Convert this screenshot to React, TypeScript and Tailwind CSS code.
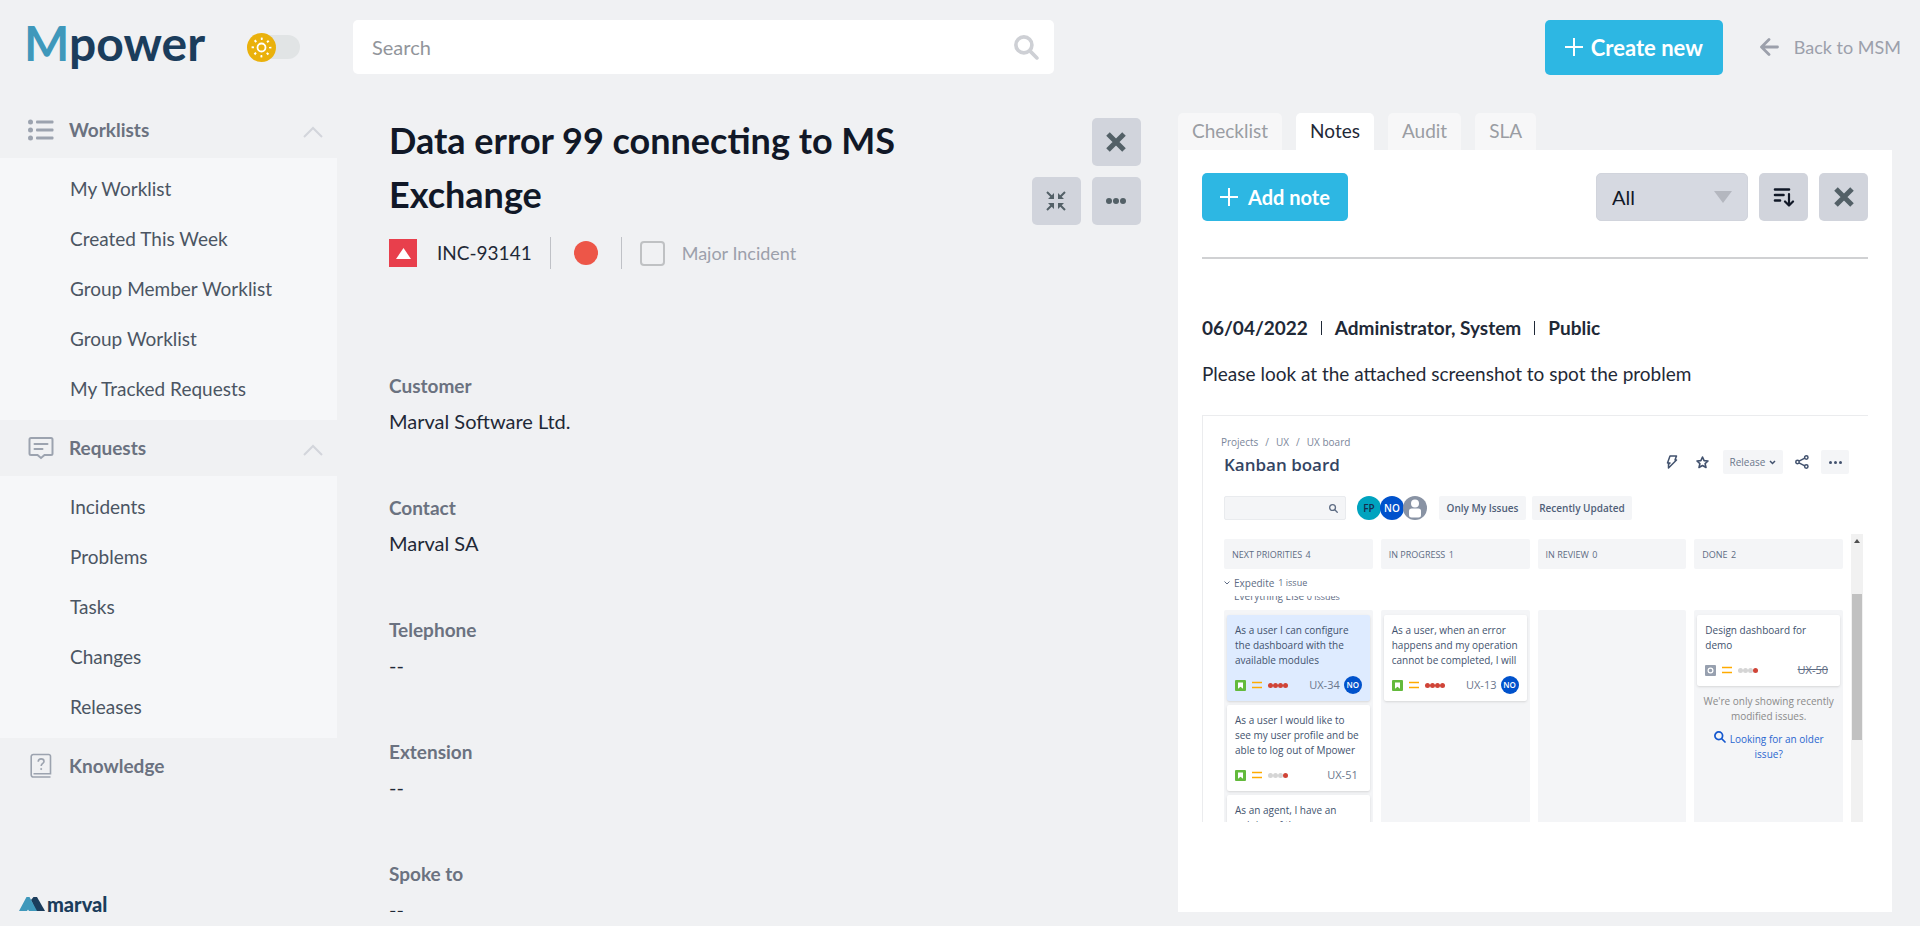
import { useState } from "react";
import type { ReactNode } from "react";

type Card = {
  id: string;
  text: string;
  level: number;
  avatar?: boolean;
  selected?: boolean;
  done?: boolean;
};

const menus = [
  {
    title: "Worklists",
    icon: <ListIcon />,
    items: [
      "My Worklist",
      "Created This Week",
      "Group Member Worklist",
      "Group Worklist",
      "My Tracked Requests",
    ],
  },
  {
    title: "Requests",
    icon: <CommentIcon />,
    items: ["Incidents", "Problems", "Tasks", "Changes", "Releases"],
  },
];

const fields = [
  ["Customer", "Marval Software Ltd."],
  ["Contact", "Marval SA"],
  ["Telephone", "--"],
  ["Extension", "--"],
  ["Spoke to", "--"],
];

const columns: { title: string; count: number; cards: Card[] }[] = [
  {
    title: "NEXT PRIORITIES",
    count: 4,
    cards: [
      {
        id: "UX-34",
        text: "As a user I can configure\nthe dashboard with the\navailable modules",
        level: 4,
        avatar: true,
        selected: true,
      },
      {
        id: "UX-51",
        text: "As a user I would like to\nsee my user profile and be\nable to log out of Mpower",
        level: 1,
      },
      {
        id: "UX-52",
        text: "As an agent, I have an\nopinion of the new",
        level: 1,
      },
    ],
  },
  {
    title: "IN PROGRESS",
    count: 1,
    cards: [
      {
        id: "UX-13",
        text: "As a user, when an error\nhappens and my operation\ncannot be completed, I will",
        level: 4,
        avatar: true,
      },
    ],
  },
  { title: "IN REVIEW", count: 0, cards: [] },
  {
    title: "DONE",
    count: 2,
    cards: [
      { id: "UX-50", text: "Design dashboard for\ndemo", level: 1, done: true },
    ],
  },
];

function ListIcon() {
  return (
    <svg width="26" height="22" viewBox="0 0 26 22" fill="#9ca3af">
      <circle cx="2.5" cy="3" r="2.5" />
      <circle cx="2.5" cy="11" r="2.5" />
      <circle cx="2.5" cy="19" r="2.5" />
      <rect x="8" y="1.5" width="17.5" height="3" rx="1" />
      <rect x="8" y="9.5" width="17.5" height="3" rx="1" />
      <rect x="8" y="17.5" width="17.5" height="3" rx="1" />
    </svg>
  );
}

function CommentIcon() {
  return (
    <svg
      width="26"
      height="24"
      viewBox="0 0 26 24"
      fill="none"
      stroke="#9ca3af"
      strokeWidth="2"
      strokeLinecap="round"
    >
      <path d="M3 2h20a1.5 1.5 0 0 1 1.5 1.5v14A1.5 1.5 0 0 1 23 19h-6.5L13 22l-3.5-3H3a1.5 1.5 0 0 1-1.5-1.5v-14A1.5 1.5 0 0 1 3 2z" />
      <path d="M6.5 8h13M6.5 13h8" />
    </svg>
  );
}

function BookIcon() {
  return (
    <svg width="26" height="26" viewBox="0 0 26 26" fill="none" stroke="#9ca3af">
      <path
        d="M22.5 24H5.500a2.300 2.300 0 0 1-2.300-2.300V3.500A2 2 0 0 1 5.200 1.500h15.500a1.800 1.800 0 0 1 1.800 1.800V20.800H5.500"
        strokeWidth="1.6"
      />
      <path
        d="M10.200 8.700c.1-1.900 1.400-2.800 2.900-2.800 1.700 0 2.900 1 2.900 2.500 0 2-2.800 2.200-2.800 4.600"
        strokeWidth="1.6"
      />
      <circle cx="13.2" cy="16" r=".6" fill="#9ca3af" />
    </svg>
  );
}

function CloseIcon() {
  return (
    <svg width="20" height="20" viewBox="0 0 20 20" stroke="#536067" strokeWidth="5">
      <path d="M2 2l16 16M18 2L2 18" />
    </svg>
  );
}

function CompressIcon() {
  return (
    <svg width="20" height="20" viewBox="0 0 20 20" fill="#536067" stroke="#536067">
      <g strokeWidth="2">
        <path d="M1 1l5 5M19 1l-5 5M1 19l5-5M19 19l-5-5" />
      </g>
      <path
        d="M8 2v6H2zM12 2v6H18zM8 18v-6H2zM12 18v-6H18z"
        stroke="none"
      />
    </svg>
  );
}

function DotsIcon() {
  return (
    <svg width="20" height="6" viewBox="0 0 20 6" fill="#536067">
      <circle cx="3" cy="3" r="3" />
      <circle cx="10" cy="3" r="3" />
      <circle cx="17" cy="3" r="3" />
    </svg>
  );
}

function SortIcon() {
  return (
    <svg
      width="22"
      height="20"
      viewBox="0 0 22 20"
      fill="none"
      stroke="#111827"
      strokeWidth="2.6"
      strokeLinecap="round"
      strokeLinejoin="round"
    >
      <path d="M2 2.500h14M2 8h8.500M2 13.500h5" />
      <path d="M16 7v11M12 14.500l4 4 4-4" strokeWidth="2.2" />
    </svg>
  );
}

function PlusIcon() {
  return (
    <svg width="18" height="18" viewBox="0 0 18 18" stroke="#fff" strokeWidth="2">
      <path d="M9 0v18M0 9h18" />
    </svg>
  );
}

function SearchIcon({ size, color }: { size: number; color: string }) {
  return (
    <svg
      width={size}
      height={size}
      viewBox="0 0 24 24"
      fill="none"
      stroke={color}
      strokeWidth="3.5"
      strokeLinecap="round"
    >
      <circle cx="9.5" cy="9.5" r="7.7" />
      <path d="M15.500 15.500l6.500 6.500" />
    </svg>
  );
}

function GreyButton({ label, children }: { label: string; children: ReactNode }) {
  return (
    <button
      type="button"
      aria-label={label}
      className="flex h-12 w-[49px] shrink-0 items-center justify-center rounded-[5px] bg-[#d1d4dc]"
    >
      {children}
    </button>
  );
}

function Header() {
  const [dark, setDark] = useState(false);

  return (
    <header className="flex h-[94px] shrink-0 items-center pr-[19px]">
      <div className="flex w-[353px] shrink-0 items-center justify-between pr-[53px] pl-[24px]">
        <a
          href="#"
          className="-mt-2 text-[48px] leading-none font-bold text-[#1b3d5c]"
        >
          <span className="text-[#3f98bb]">M</span>power
        </a>
        <label className="relative flex h-6 w-[52px] rounded-full bg-[#e1e4e5]">
          <input
            type="checkbox"
            checked={dark}
            onChange={() => setDark(!dark)}
            aria-label="Dark mode"
            className="sr-only"
          />
          <svg
            className="absolute -top-[2px] -left-px"
            width="29"
            height="29"
            viewBox="0 0 29 29"
          >
            <circle cx="14.5" cy="14.5" r="14.5" fill="#eab10c" />
            <circle cx="14.5" cy="14.5" r="4" fill="none" stroke="#fff" strokeWidth="1.8" />
            <circle
              cx="14.5"
              cy="14.5"
              r="8.7"
              fill="none"
              stroke="#fff"
              strokeWidth="2.4"
              strokeDasharray="1.9 4.933"
              strokeDashoffset=".95"
            />
          </svg>
        </label>
      </div>

      <label className="flex h-[54px] w-full max-w-[701px] items-center rounded-[5px] bg-white px-[19px]">
        <input
          type="text"
          placeholder="Search"
          aria-label="Search"
          className="min-w-0 flex-1 text-[20px] outline-none placeholder:text-[#92959b]"
        />
        <span className="-mr-1">
          <SearchIcon size={25} color="#ced0d5" />
        </span>
      </label>

      <div className="ml-auto flex shrink-0 items-center gap-[37px]">
        <button
          type="button"
          className="flex h-[55px] w-[178px] items-center justify-center gap-2 rounded-[5px] bg-[#2db7e3] text-[22px] font-bold text-white"
        >
          <PlusIcon />
          Create new
        </button>
        <a href="#" className="flex items-center gap-[15px] text-[18px] text-[#9ca0ab]">
          <svg
            width="19"
            height="18"
            viewBox="0 0 19 18"
            fill="none"
            stroke="#9ca0ab"
            strokeWidth="2.8"
            strokeLinecap="round"
            strokeLinejoin="round"
          >
            <path d="M9 1.500L1.500 9 9 16.500M2 9h15.500" />
          </svg>
          Back to MSM
        </a>
      </div>
    </header>
  );
}

function Sidebar() {
  return (
    <aside className="flex flex-col pt-2">
      <nav>
        {menus.map((menu) => (
          <section key={menu.title}>
            <button
              type="button"
              className="flex h-14 w-full items-center pr-[14px] pl-7 text-[19px] font-bold text-[#6b7280]"
            >
              {menu.icon}
              <span className="ml-[15px]">{menu.title}</span>
              <svg
                className="mt-1 ml-auto"
                width="20"
                height="12"
                viewBox="0 0 20 12"
                fill="none"
                stroke="#d3d5db"
                strokeWidth="2"
              >
                <path d="M1 11l9-9 9 9" />
              </svg>
            </button>
            <ul className="bg-[#f6f7f9] py-[6px]">
              {menu.items.map((item) => (
                <li key={item}>
                  <a
                    href="#"
                    className="flex h-[50px] items-center pl-[70px] text-[19px] text-[#4b5563]"
                  >
                    {item}
                  </a>
                </li>
              ))}
            </ul>
          </section>
        ))}
        <a
          href="#"
          className="flex h-14 items-center gap-[15px] pl-7 text-[19px] font-bold text-[#6b7280]"
        >
          <BookIcon />
          Knowledge
        </a>
      </nav>

      <div className="mt-auto mb-3 flex items-center gap-[2px] pl-[19px]">
        <svg width="26" height="14" viewBox="0 0 26 14">
          <path d="M12 3L14.500 0h3.500l8 14h-9z" fill="#1b3d5c" />
          <path d="M0 14L7.500 0h3L18 14h-8l-1-1.500L8 14z" fill="#3f98bb" />
        </svg>
        <span className="text-[20px] leading-5 font-black text-[#1b3d5c]">marval</span>
      </div>
    </aside>
  );
}

function Request() {
  return (
    <main className="mb-[14px] overflow-hidden pt-[19px] pr-[37px] pl-[52px]">
      <div className="flex items-start justify-between">
        <h1 className="max-w-[560px] text-[36px] leading-[54px] font-bold text-[#111827]">
          Data error 99 connecting to MS Exchange
        </h1>
        <div className="mt-[5px] flex shrink-0 flex-col items-end gap-[11px]">
          <GreyButton label="Close">
            <CloseIcon />
          </GreyButton>
          <div className="flex gap-[11px]">
            <GreyButton label="Collapse">
              <CompressIcon />
            </GreyButton>
            <GreyButton label="More">
              <DotsIcon />
            </GreyButton>
          </div>
        </div>
      </div>

      <div className="mt-3 flex h-8 items-center">
        <span className="flex h-7 w-7 items-center justify-center bg-[#e83f4c]">
          <svg width="15" height="11" viewBox="0 0 15 11" fill="#fff">
            <path d="M7.500 0L15 11H0z" />
          </svg>
        </span>
        <span className="ml-5 text-[19px] text-[#1f2937]">INC-93141</span>
        <span className="ml-[18px] h-8 w-px bg-[#bfc1c6]" />
        <span className="mx-[23px] h-6 w-6 rounded-full bg-[#ed5648]" />
        <span className="h-8 w-px bg-[#bfc1c6]" />
        <label className="ml-[18px] flex items-center gap-[17px] text-[18px] text-[#9ca0ab]">
          <input
            type="checkbox"
            className="h-[25px] w-[25px] appearance-none rounded-[4px] border-2 border-[#bfc1c3] checked:bg-[#bfc1c3]"
          />
          Major Incident
        </label>
      </div>

      <dl className="mt-[105px] flex flex-col gap-[63px]">
        {fields.map(([label, value]) => (
          <div key={label} className="flex flex-col gap-[11px]">
            <dt className="text-[19px] leading-6 font-bold text-[#6b7280]">{label}</dt>
            <dd className="text-[20px] leading-6 text-[#1f2937]">{value}</dd>
          </div>
        ))}
      </dl>
    </main>
  );
}

function Priority({ level }: { level: number }) {
  return (
    <span className="flex">
      {[0, 1, 2, 3].map((i) => (
        <span
          key={i}
          className={
            i >= 4 - level
              ? "h-[5px] w-[5px] rounded-full bg-[#d04437]"
              : "h-[5px] w-[5px] rounded-full bg-[#d5d5d5]"
          }
        />
      ))}
    </span>
  );
}

function IssueCard({ card }: { card: Card }) {
  return (
    <li
      className={
        card.selected
          ? "rounded-[2px] bg-[#deebff] px-2 pt-2 pb-[6px] shadow-sm"
          : "rounded-[2px] bg-white px-2 pt-2 pb-[6px] shadow-sm"
      }
    >
      <p className="text-[10px] leading-[15px] whitespace-pre text-[#42526e]">{card.text}</p>
      <div className="mt-[7px] flex h-5 items-center">
        <svg width="11" height="11" viewBox="0 0 11 11">
          {card.done ? (
            <>
              <rect width="11" height="11" rx="1" fill="#97a0af" />
              <circle cx="5.5" cy="5.5" r="2.4" fill="none" stroke="#fff" strokeWidth="1.2" />
            </>
          ) : (
            <>
              <rect width="11" height="11" rx="1" fill="#63ba3c" />
              <path d="M3 2.500h5v6.200L5.500 6.700 3 8.700z" fill="#fff" />
            </>
          )}
        </svg>
        <svg className="mx-[6px]" width="10" height="8" viewBox="0 0 10 8" stroke="#ffab00">
          <path d="M0 1.500h10M0 6.500h10" strokeWidth="1.5" />
        </svg>
        <Priority level={card.level} />
        <span
          className={
            card.done
              ? "mr-1 ml-auto text-[11px] text-[#5e6c84] line-through"
              : "mr-1 ml-auto text-[11px] text-[#6b778c]"
          }
        >
          {card.id}
        </span>
        {card.avatar && (
          <span className="flex h-[18px] w-[18px] items-center justify-center rounded-full bg-[#0052cc] text-[8px] font-semibold text-white">
            NO
          </span>
        )}
      </div>
    </li>
  );
}

function Board() {
  return (
    <div className="mt-[27px] flex h-[407px] flex-col overflow-hidden border-t border-l border-[#ebecee] pr-[5px] pl-[21px] font-['Open_Sans',sans-serif] text-[#5e6c84]">
      <div className="mt-5 flex items-start justify-between pr-[14px]">
        <div>
          <p className="-ml-[3px] flex gap-[7px] text-[10px] leading-3 text-[#7a869a]">
            <span>Projects</span>
            <span>/</span>
            <span>UX</span>
            <span>/</span>
            <span>UX board</span>
          </p>
          <h2 className="mt-[5px] text-[17px] leading-6 font-semibold text-[#344563]">
            Kanban board
          </h2>
        </div>
        <div className="mt-[14px] flex items-center">
          <svg
            width="12"
            height="14"
            viewBox="0 0 12 14"
            fill="none"
            stroke="#42526e"
            strokeWidth="1.5"
            strokeLinejoin="round"
          >
            <path d="M4 1h6.500L9 5h1.500L2.500 13V9.500L4 8H1.500z" />
          </svg>
          <svg
            className="ml-[18px]"
            width="13"
            height="13"
            viewBox="0 0 13 13"
            fill="none"
            stroke="#42526e"
            strokeWidth="1.6"
            strokeLinejoin="round"
          >
            <path d="M6.500 1l1.600 3.600 3.900.4-2.900 2.600.9 3.900-3.500-2-3.500 2 .9-3.900L1 5l3.900-.4z" />
          </svg>
          <button
            type="button"
            className="ml-[14px] flex h-6 w-[60px] items-center justify-center gap-1 rounded-[2px] bg-[#f4f5f7] text-[10px] text-[#6b778c]"
          >
            Release
            <svg width="7" height="5" viewBox="0 0 7 5" fill="none" stroke="#42526e" strokeWidth="1.5">
              <path d="M1 1l2.500 2.500L6 1" />
            </svg>
          </button>
          <svg
            className="mx-3"
            width="14"
            height="14"
            viewBox="0 0 14 14"
            fill="none"
            stroke="#42526e"
            strokeWidth="1.5"
          >
            <circle cx="2.5" cy="7" r="1.7" />
            <circle cx="11.3" cy="2.5" r="1.7" />
            <circle cx="11.3" cy="11.5" r="1.7" />
            <path d="M4 6.200l5.800-3M4 7.800l5.800 3" />
          </svg>
          <button
            type="button"
            aria-label="Board actions"
            className="flex h-6 w-7 items-center justify-center rounded-[2px] bg-[#f4f5f7]"
          >
            <svg width="13" height="3" viewBox="0 0 13 3" fill="#42526e">
              <circle cx="1.5" cy="1.5" r="1.5" />
              <circle cx="6.5" cy="1.5" r="1.5" />
              <circle cx="11.5" cy="1.5" r="1.5" />
            </svg>
          </button>
        </div>
      </div>

      <div className="mt-[19px] flex items-center">
        <label className="flex h-6 w-[122px] items-center rounded-[2px] border border-[#e9ebee] bg-[#f4f5f7] pr-[7px]">
          <input type="text" aria-label="Search board" className="min-w-0 flex-1 text-[10px] outline-none" />
          <SearchIcon size={9} color="#5e6c84" />
        </label>
        <div className="ml-[11px] flex text-[10px] font-semibold">
          <span className="flex h-6 w-6 items-center justify-center rounded-full bg-[#00a3bf] text-[#172b4d]">
            FP
          </span>
          <span className="-ml-px flex h-6 w-6 items-center justify-center rounded-full bg-[#0052cc] text-white">
            NO
          </span>
          <svg className="-ml-px" width="24" height="24" viewBox="0 0 24 24">
            <circle cx="12" cy="12" r="12" fill="#8993a4" />
            <circle cx="12" cy="7.5" r="4" fill="#fff" />
            <rect x="6" y="12.5" width="12" height="9" rx="2.5" fill="#fff" />
          </svg>
        </div>
        <button
          type="button"
          className="ml-3 h-6 w-[87px] rounded-[2px] bg-[#f4f5f7] text-[10px] font-semibold whitespace-nowrap text-[#505f79]"
        >
          Only My Issues
        </button>
        <button
          type="button"
          className="ml-[6px] h-6 w-[100px] rounded-[2px] bg-[#f4f5f7] text-[10px] font-semibold whitespace-nowrap text-[#505f79]"
        >
          Recently Updated
        </button>
      </div>

      <div className="mt-[14px] flex min-h-0 flex-1 gap-2">
        <div className="flex min-w-0 flex-1 flex-col pt-[5px]">
          <div className="flex gap-2">
            {columns.map((column) => (
              <h3
                key={column.title}
                className="h-[30px] min-w-0 flex-1 rounded-[2px] bg-[#f4f5f7] pl-2 text-[9px] leading-8 font-medium"
              >
                {column.title} <span className="ml-px">{column.count}</span>
              </h3>
            ))}
          </div>
          <p className="mt-[6px] flex h-4 items-center text-[10px]">
            <svg width="6" height="4" viewBox="0 0 6 4" fill="none" stroke="#5e6c84">
              <path d="M.5.5L3 3 5.500.5" />
            </svg>
            <span className="mx-1">Expedite</span>
            <span className="text-[9px]">1 issue</span>
          </p>
          {/* Second swimlane title is half hidden under the first */}
          <div className="mt-[5px] flex h-[7px] items-end overflow-hidden">
            <p className="pl-[10px] text-[10px] leading-3">
              Everything Else <span className="text-[9px]">0 issues</span>
            </p>
          </div>
          <div className="mt-[7px] flex min-h-0 flex-1 gap-2">
            {columns.map((column) => (
              <div
                key={column.title}
                className="min-w-0 flex-1 overflow-hidden rounded-t-[2px] bg-[#f4f5f7] px-[3px] pt-[5px]"
              >
                <ul className="flex flex-col gap-1">
                  {column.cards.map((card) => (
                    <IssueCard key={card.id} card={card} />
                  ))}
                </ul>
                {column.title === "DONE" && (
                  <div className="mt-2 text-center text-[10px] leading-[15px] text-[#8a8a8a]">
                    <p>
                      We're only showing recently
                      <br />
                      modified issues.
                    </p>
                    <a href="#" className="mt-[7px] block text-[#2a66d0]">
                      <span className="mr-1 inline-block">
                        <SearchIcon size={12} color="#1558cf" />
                      </span>
                      Looking for an older
                      <br />
                      issue?
                    </a>
                  </div>
                )}
              </div>
            ))}
          </div>
        </div>
        <div className="w-3 shrink-0 bg-[#f1f1f1] px-px">
          <svg className="mx-auto mt-[5px]" width="6" height="4" viewBox="0 0 6 4" fill="#505050">
            <path d="M3 0l3 4H0z" />
          </svg>
          <div className="mt-[51px] h-[146px] bg-[#c1c1c1]" />
        </div>
      </div>
    </div>
  );
}

function Notes() {
  const [tab, setTab] = useState("Notes");

  return (
    <section className="mt-[19px] mr-7 mb-[14px] flex min-w-0 flex-col">
      <div role="tablist" className="flex gap-[14px]">
        {["Checklist", "Notes", "Audit", "SLA"].map((name) => (
          <button
            key={name}
            type="button"
            role="tab"
            aria-selected={tab === name}
            onClick={() => setTab(name)}
            className={
              tab === name
                ? "h-[37px] rounded-t-[5px] bg-white px-[14px] text-[19px] text-[#1f2937]"
                : "h-[37px] rounded-t-[5px] bg-[#f7f7f8] px-[14px] text-[19px] text-[#9a9da3]"
            }
          >
            {name}
          </button>
        ))}
      </div>

      <div className="min-h-0 flex-1 overflow-hidden bg-white px-6 pt-[23px]">
        <div className="flex items-center gap-[11px]">
          <button
            type="button"
            className="mr-auto flex h-12 w-[146px] items-center justify-center gap-[10px] rounded-[5px] bg-[#2db7e3] text-[20px] font-bold text-white"
          >
            <PlusIcon />
            Add note
          </button>
          <div className="relative">
            <select
              aria-label="Filter notes"
              className="h-12 w-[152px] appearance-none rounded-[5px] border border-[#d1d4dc] bg-[#d6d9e1] pl-[15px] text-[20px] text-[#111827]"
            >
              <option>All</option>
            </select>
            <svg
              className="pointer-events-none absolute top-[18px] right-4"
              width="18"
              height="12"
              viewBox="0 0 18 12"
              fill="#b4b7bf"
            >
              <path d="M0 0h18L9 12z" />
            </svg>
          </div>
          <GreyButton label="Sort notes">
            <SortIcon />
          </GreyButton>
          <GreyButton label="Close notes">
            <CloseIcon />
          </GreyButton>
        </div>

        <hr className="mt-9 border-t-2 border-[#d0d1d3]" />

        <article>
          <p className="mt-[55px] flex items-center gap-[13px] text-[19px] leading-7 font-bold text-[#1f2937]">
            06/04/2022
            <span className="h-[14px] w-px bg-[#1f2937]" />
            Administrator, System
            <span className="h-[14px] w-px bg-[#1f2937]" />
            Public
          </p>
          <p className="mt-[18px] text-[19px] leading-7 text-[#1f2937]">
            Please look at the attached screenshot to spot the problem
          </p>
          <Board />
        </article>
      </div>
    </section>
  );
}

export default function App() {
  return (
    <div className="flex h-screen flex-col overflow-hidden bg-[#f0f1f3] font-[Lato,sans-serif]">
      <Header />
      <div className="grid min-h-0 flex-1 grid-cols-[337px_17fr_15fr]">
        <Sidebar />
        <Request />
        <Notes />
      </div>
    </div>
  );
}
